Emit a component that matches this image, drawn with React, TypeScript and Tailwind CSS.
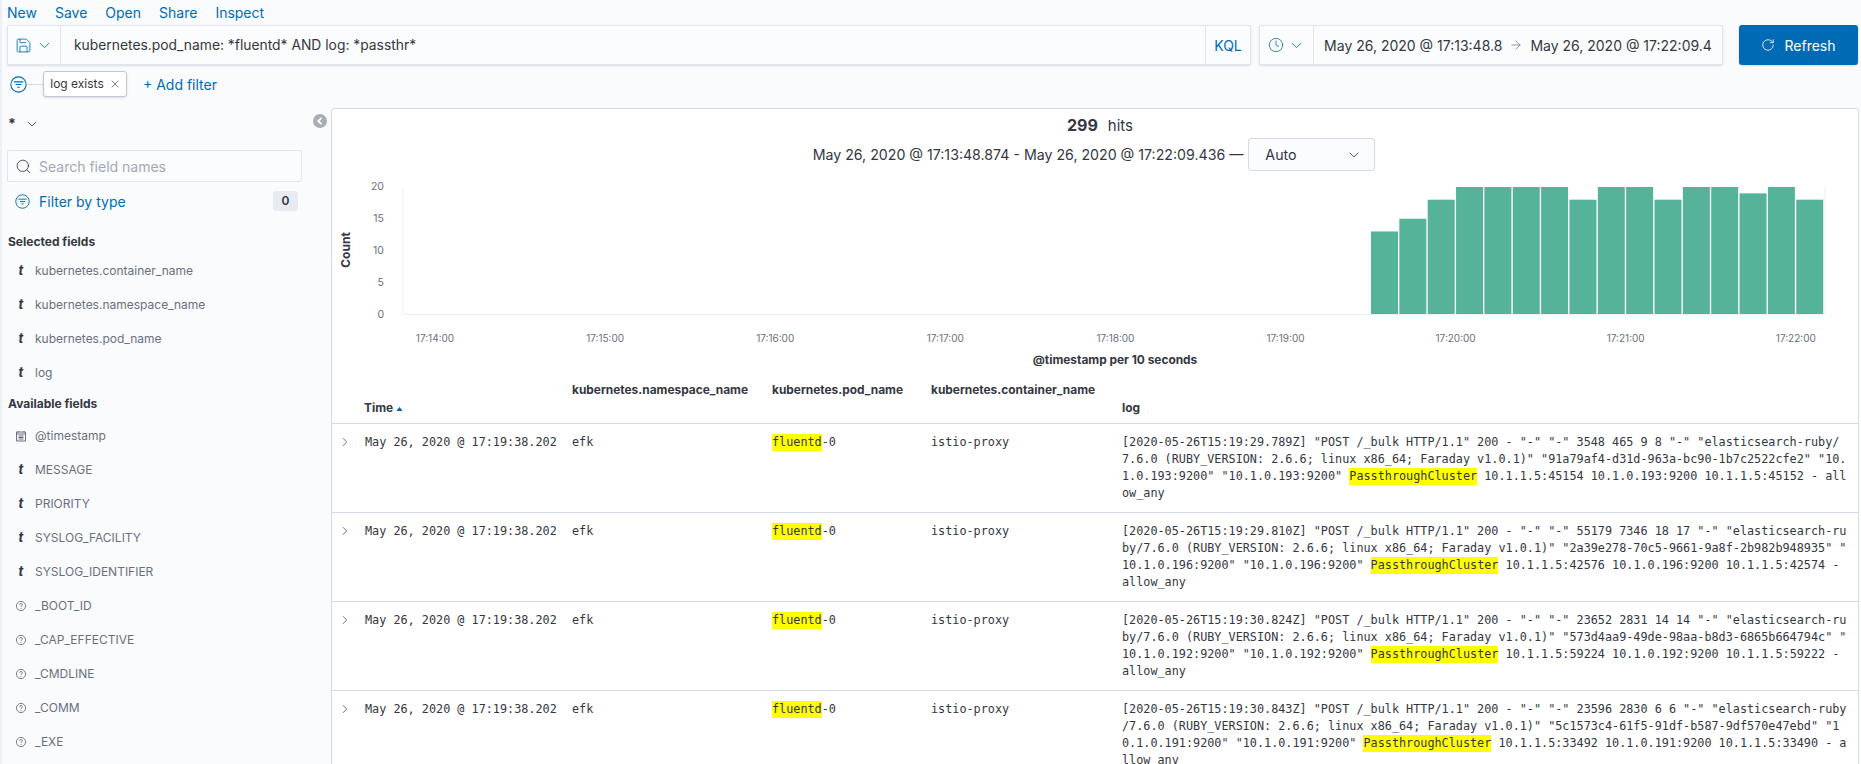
import React from 'react';
import { ArrowRight, ChevronDown, ChevronRight, Clock, RotateCw, Save, Search, X } from 'lucide-react';

const selectedFields = ['kubernetes.container_name', 'kubernetes.namespace_name', 'kubernetes.pod_name', 'log'];

const availableFields = [
  { name: '@timestamp', type: 'date' },
  { name: 'MESSAGE', type: 'text' },
  { name: 'PRIORITY', type: 'text' },
  { name: 'SYSLOG_FACILITY', type: 'text' },
  { name: 'SYSLOG_IDENTIFIER', type: 'text' },
  { name: '_BOOT_ID', type: 'unknown' },
  { name: '_CAP_EFFECTIVE', type: 'unknown' },
  { name: '_CMDLINE', type: 'unknown' },
  { name: '_COMM', type: 'unknown' },
  { name: '_EXE', type: 'unknown' },
];

const bars = [13, 15, 18, 20, 20, 20, 20, 18, 20, 20, 18, 20, 20, 19, 20, 18];
const ticks = ['17:14:00', '17:15:00', '17:16:00', '17:17:00', '17:18:00', '17:19:00', '17:20:00', '17:21:00', '17:22:00'];

// \u200B marks the places where the reference wraps but this browser would not
const rows = [
  {
    before: '[2020-05-26T15:19:29.789Z] "POST /_bulk HTTP/1.1" 200 - "-" "-" 3548 465 9 8 "-" "elasticsearch-ruby/7.6.0 (RUBY_VERSION: 2.6.6; linux x86_64; Faraday v1.0.1)" "91a79af4-d31d-963a-bc90-1b7c2522cfe2" "10.1.0.193:9200" "10.1.0.193:9200" ',
    after: ' 10.1.1.5:45154 10.1.0.193:9200 10.1.1.5:45152 - allow_any',
  },
  {
    before: '[2020-05-26T15:19:29.810Z] "POST /_bulk HTTP/1.1" 200 - "-" "-" 55179 7346 18 17 "-" "elasticsearch-ruby/7.6.0 (RUBY_VERSION: 2.6.6; linux x86_64; Faraday v1.0.1)" "2a39e278-70c5-9661-9a8f-2b982b948935" "\u200B10.1.0.196:9200" "10.1.0.196:9200" ',
    after: ' 10.1.1.5:42576 10.1.0.196:9200 10.1.1.5:42574 - allow_any',
  },
  {
    before: '[2020-05-26T15:19:30.824Z] "POST /_bulk HTTP/1.1" 200 - "-" "-" 23652 2831 14 14 "-" "elasticsearch-ruby/7.6.0 (RUBY_VERSION: 2.6.6; linux x86_64; Faraday v1.0.1)" "573d4aa9-49de-98aa-b8d3-6865b664794c" "\u200B10.1.0.192:9200" "10.1.0.192:9200" ',
    after: ' 10.1.1.5:59224 10.1.0.192:9200 10.1.1.5:59222 - allow_any',
  },
  {
    before: '[2020-05-26T15:19:30.843Z] "POST /_bulk HTTP/1.1" 200 - "-" "-" 23596 2830 6 6 "-" "elasticsearch-ruby\u200B/7.6.0 (RUBY_VERSION: 2.6.6; linux x86_64; Faraday v1.0.1)" "5c1573c4-61f5-91df-b587-9df570e47ebd" "10.1.0.191:9200" "10.1.0.191:9200" ',
    after: ' 10.1.1.5:33492 10.1.0.191:9200 10.1.1.5:33490 - allow_any',
  },
];

const FilterIcon = ({ className }: { className?: string }) => (
  <svg viewBox="0 0 16 16" fill="none" stroke="currentColor" strokeWidth="1" className={className}>
    <circle cx="8" cy="8" r="7.2" />
    <path d="M3.5 5.5h9M5.2 8h5.6M6.8 10.5h2.4" />
  </svg>
);

const FieldIcon = ({ type }: { type: string }) => {
  if (type === 'text') {
    return <span className="w-[12px] text-center text-[13px] font-bold italic text-[#343741]">t</span>;
  }
  if (type === 'date') {
    return (
      <svg viewBox="0 0 12 12" fill="none" stroke="#69707d" strokeWidth="1" className="h-[12px] w-[12px]">
        <path d="M1.5 2h9v9h-9zM1.5 4h9M3 1v1.5M9 1v1.5M3.5 6h5M3.5 7.5h5M3.5 9h5" />
      </svg>
    );
  }
  return (
    <svg viewBox="0 0 12 12" fill="none" stroke="#69707d" strokeWidth="0.9" className="h-[12px] w-[12px]">
      <circle cx="6" cy="6" r="4.6" />
      <path d="M4.6 4.8C4.7 3.9 5.3 3.5 6 3.5c.8 0 1.4.5 1.4 1.2 0 1.1-1.4 1.1-1.4 2.2M6 8v.9" />
    </svg>
  );
};

const FieldRow = ({ name, type }: { name: string; type: string }) => (
  <div className="flex h-[34px] items-center gap-[8px] pl-[13px] text-[12px] text-[#69707d]">
    <FieldIcon type={type} />
    <span>{name}</span>
  </div>
);

const Mark = ({ children }: { children: React.ReactNode }) => (
  <mark className="inline-block h-[17px] bg-[#ffff00] text-[#343741]">{children}</mark>
);

const App = () => {
  return (
    <div className="h-[764px] overflow-hidden border-l-2 border-[#eceff4] bg-[#fafbfd] font-['Inter',sans-serif] text-[#343741]">
      <div className="flex h-[25px] items-center gap-[18px] pl-[5px] text-[14px] text-[#006bb4]">
        <span>New</span>
        <span>Save</span>
        <span>Open</span>
        <span>Share</span>
        <span>Inspect</span>
      </div>

      <div className="flex h-[40px] pl-[5px]">
        <div className="flex w-[1244px] items-stretch rounded-[2px] border border-[#e0e5ee] bg-[#fbfcfd] shadow-sm">
          <div className="flex w-[53px] items-center justify-center gap-[4px] border-r border-[#e0e5ee] text-[#006bb4]">
            <Save className="h-[17px] w-[17px]" strokeWidth={1.2} />
            <ChevronDown className="h-[17px] w-[17px]" strokeWidth={1.2} />
          </div>
          <div className="flex flex-1 items-center pl-[13px] text-[13.85px]">kubernetes.pod_name: *fluentd* AND log: *passthr*</div>
          <div className="flex w-[45px] items-center justify-center border-l border-[#e0e5ee] text-[14px] text-[#006bb4]">KQL</div>
        </div>
        <div className="ml-[8px] flex w-[464px] items-stretch rounded-[2px] border border-[#e0e5ee] bg-[#fbfcfd] shadow-sm">
          <div className="flex w-[54px] items-center justify-center gap-[4px] border-r border-[#e0e5ee] text-[#006bb4]">
            <Clock className="h-[16px] w-[16px]" strokeWidth={1.2} />
            <ChevronDown className="h-[17px] w-[17px]" strokeWidth={1.2} />
          </div>
          <div className="flex flex-1 items-center justify-center gap-[7px] text-[14px]">
            <span>May 26, 2020 @ 17:13:48.8</span>
            <ArrowRight className="h-[14px] w-[14px] text-[#69707d]" strokeWidth={1.2} />
            <span>May 26, 2020 @ 17:22:09.4</span>
          </div>
        </div>
        <button className="ml-[16px] flex w-[119px] items-center justify-center gap-[9px] rounded-[3px] bg-[#006bb4] text-[14px] text-white shadow-sm">
          <RotateCw className="h-[14px] w-[14px]" strokeWidth={1.4} />
          Refresh
        </button>
      </div>

      <div className="flex h-[43px] items-start pl-[8px] pt-[6px]">
        <div className="flex h-[26px] items-center">
          <FilterIcon className="h-[17px] w-[17px] text-[#006bb4]" />
          <div className="h-px w-[16px] bg-[#d3dae6]" />
        </div>
        <div className="flex h-[26px] w-[84px] items-center justify-center gap-[5px] rounded-[3px] border border-[#c2c8d3] bg-white pl-[1px] text-[12px] shadow-sm">
          log exists
          <X className="h-[12px] w-[12px]" strokeWidth={1.3} />
        </div>
        <div className="ml-[16px] flex h-[26px] items-center text-[14px] text-[#006bb4]">+ Add filter</div>
      </div>

      <div className="flex">
        <aside className="relative w-[329px] shrink-0">
          <div className="flex h-[30px] items-center gap-[8px] pl-[6px] pt-[1px] text-[14px] font-bold">
            <span>*</span>
            <ChevronDown className="h-[16px] w-[16px]" strokeWidth={1.2} />
          </div>
          <svg viewBox="0 0 14 14" className="absolute left-[311px] top-[6px] h-[14px] w-[14px]">
            <circle cx="7" cy="7" r="7" fill="#a8adb6" />
            <path d="M8.5 3.8 5.2 7l3.3 3.2" fill="none" stroke="#fff" strokeWidth="1.8" />
          </svg>

          <div className="ml-[5px] mt-[12px] flex h-[32px] w-[295px] items-center gap-[7px] rounded-[2px] border border-[#e0e5ee] bg-[#fbfcfd] pl-[7px] text-[14px] text-[#a3a9b3]">
            <Search className="h-[17px] w-[17px] text-[#343741]" strokeWidth={1.2} />
            Search field names
          </div>

          <div className="mt-[9px] flex h-[20px] items-center pl-[13px] pr-[33px] text-[14px] text-[#006bb4]">
            <FilterIcon className="h-[15px] w-[15px]" />
            <span className="ml-[9px]">Filter by type</span>
            <span className="ml-auto flex h-[20px] w-[25px] items-center justify-center rounded-[3px] bg-[#e8ebf1] text-[12px] font-semibold text-[#343741]">0</span>
          </div>

          <h3 className="mt-[22px] flex h-[17px] items-center pl-[6px] text-[12px] font-bold">Selected fields</h3>
          <div className="mt-[4px]">
            {selectedFields.map((name) => (
              <FieldRow key={name} name={name} type="text" />
            ))}
          </div>
          <h3 className="mt-[5px] flex h-[17px] items-center pl-[6px] text-[12px] font-bold">Available fields</h3>
          <div className="mt-[7px]">
            {availableFields.map((field) => (
              <FieldRow key={field.name} name={field.name} type={field.type} />
            ))}
          </div>
        </aside>

        <main className="h-[700px] w-[1528px] shrink-0 rounded-[3px] border border-[#d3dae6] bg-white">
          <div className="flex h-[28px] items-end justify-center pl-[10px] text-[14px]">
            <span className="text-[16px] font-bold">299</span>
            <span className="ml-[10px] text-[15px]">hits</span>
          </div>
          <div className="mt-[1px] flex h-[33px] items-center justify-center pr-[2px] text-[14.18px]">
            <span>May 26, 2020 @ 17:13:48.874 - May 26, 2020 @ 17:22:09.436 —</span>
            <div className="ml-[5px] flex h-[33px] w-[127px] items-center justify-between rounded-[3px] border border-[#d3dae6] bg-[#fbfcfd] pl-[16px] pr-[12px]">
              Auto
              <ChevronDown className="h-[16px] w-[16px]" strokeWidth={1.2} />
            </div>
          </div>

          <svg width="1526" height="194" viewBox="0 0 1526 194" className="mt-[1px] block">
            <path d="M71 14.5V142.5H1493" fill="none" stroke="#eef0f3" strokeWidth="1" />
            <path d="M1493 14V142" fill="none" stroke="#eef0f3" strokeWidth="1" />
            {bars.map((value, i) => {
              const h = (value / 20) * 127;
              return <rect key={i} x={1039 + i * 28.35} y={142 - h} width={27} height={h} fill="#54b399" />;
            })}
            {[20, 15, 10, 5, 0].map((value, i) => (
              <text key={value} x="52" y={18 + i * 32} textAnchor="end" fontSize="10.5" fill="#69707d">{value}</text>
            ))}
            <text x="18" y="78" textAnchor="middle" fontSize="12" fontWeight="700" fill="#343741" transform="rotate(-90 18 78)">Count</text>
            {ticks.map((tick, i) => (
              <text key={tick} x={103 + i * 170.1} y="170" textAnchor="middle" fontSize="10" fill="#69707d">{tick}</text>
            ))}
            <text x="783" y="192" textAnchor="middle" fontSize="11.9" fontWeight="700" fill="#343741">@timestamp per 10 seconds</text>
          </svg>

          <div className="flex h-[58px] border-b border-[#d3dae6] text-[11.9px] font-bold">
            <div className="flex w-[240px] items-end pb-[6px] pl-[32px]">
              Time
              <svg viewBox="0 0 8 5" className="mb-[6px] ml-[3px] h-[4px] w-[7px]"><path d="M0 5 4 0l4 5z" fill="#006bb4" /></svg>
            </div>
            <div className="w-[200px] pt-[15px]">kubernetes.namespace_name</div>
            <div className="w-[159px] pt-[15px]">kubernetes.pod_name</div>
            <div className="w-[191px] pt-[15px]">kubernetes.container_name</div>
            <div className="flex items-end pb-[6px]">log</div>
          </div>

          {rows.map((row, i) => (
            <div key={i} className="flex h-[89px] border-b border-[#d3dae6] pt-[10px] font-['DejaVu_Sans_Mono',monospace] text-[11.8px] leading-[17px]">
              <div className="w-[33px] pl-[6px] pt-[1px]">
                <ChevronRight className="h-[14px] w-[14px]" strokeWidth={1.2} />
              </div>
              <div className="w-[207px]">May 26, 2020 @ 17:19:38.202</div>
              <div className="w-[200px]">efk</div>
              <div className="w-[159px]"><Mark>fluentd</Mark>-0</div>
              <div className="w-[191px]">istio-proxy</div>
              <div className="w-[728px] break-all">
                {row.before}<Mark>PassthroughCluster</Mark>{row.after}
              </div>
            </div>
          ))}
        </main>
      </div>
    </div>
  );
};

export default App;
